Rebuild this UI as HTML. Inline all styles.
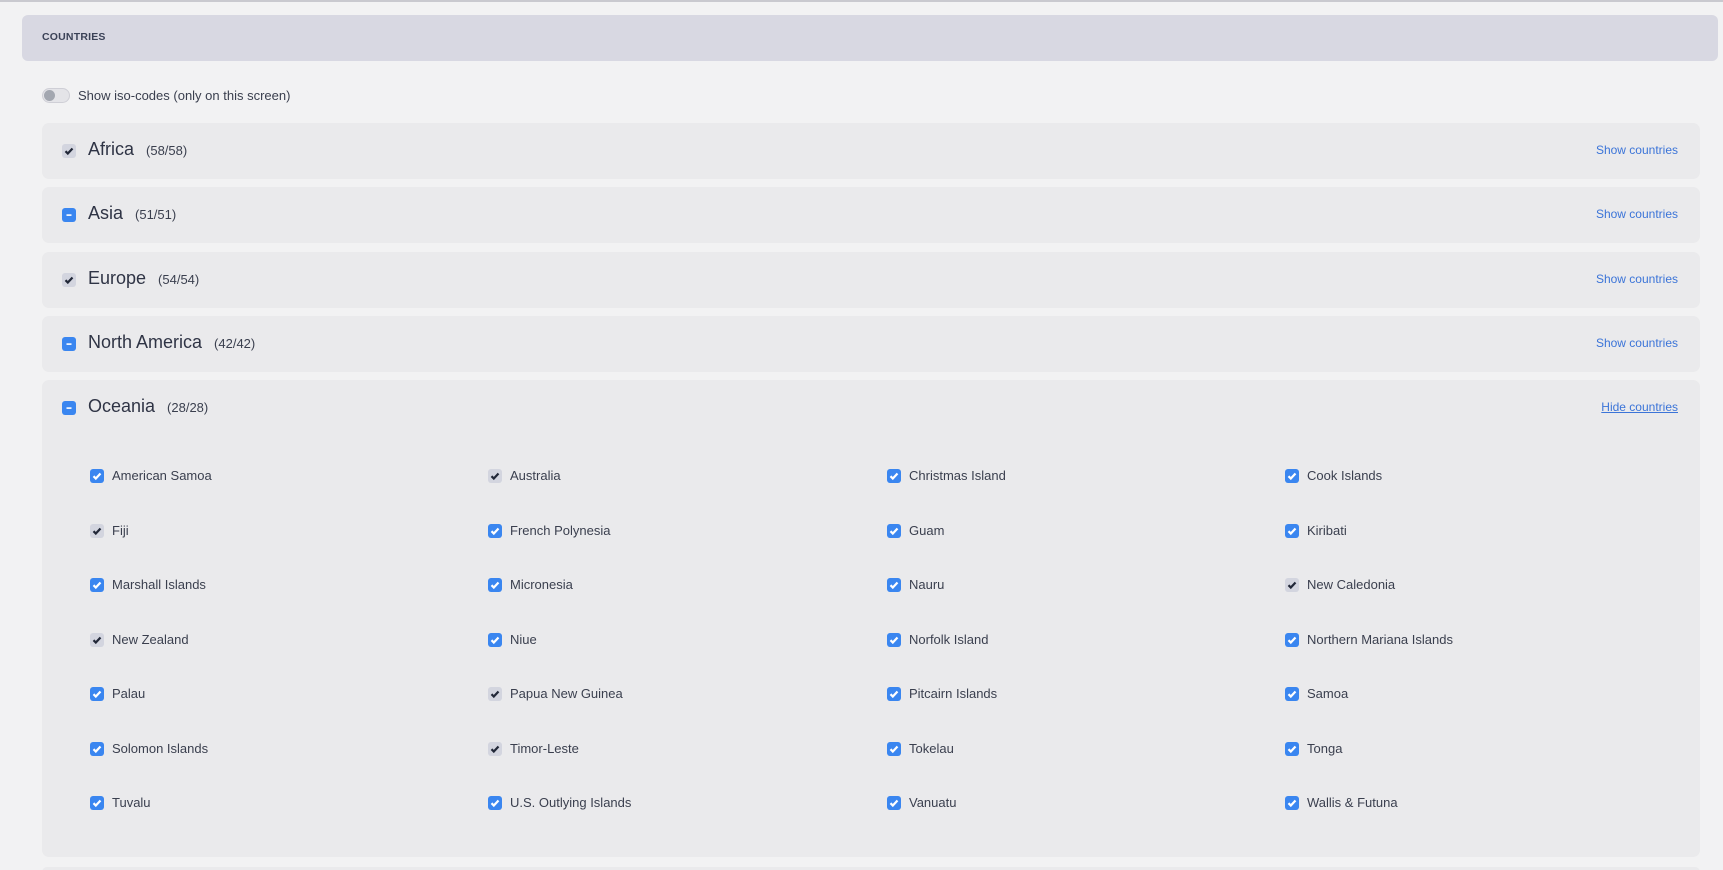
<!DOCTYPE html>
<html style="overflow:hidden;height:870px"><head><meta charset="utf-8"><style>
*{box-sizing:border-box;margin:0;padding:0}
body{width:1723px;height:870px;background:#f2f2f3;font-family:"Liberation Sans",sans-serif;position:relative;overflow:hidden;border-top:2px solid #c9c9cf}
.hdr{position:absolute;left:22px;top:13px;width:1696px;height:46px;background:#d8d8e2;border-radius:6px}
.hdr span{position:absolute;left:20px;top:16px;font-size:10.5px;font-weight:bold;color:#3b4257;letter-spacing:.2px}
.tog{position:absolute;left:42px;top:86px;width:28px;height:15px;border-radius:8px;background:#e4e4e8;border:1px solid #cfcfd6}
.tog:before{content:"";position:absolute;left:1px;top:1px;width:11px;height:11px;border-radius:50%;background:#a3a7b0}
.togl{position:absolute;left:78px;top:86px;font-size:13px;color:#3a3f4e}
.card{position:absolute;left:42px;width:1658px;background:#eaeaec;border-radius:7px}
.cb{position:absolute;width:14px;height:14px;border-radius:3px}
.blue{background:#3a86f0}
.grey{background:#d3d5df}
.cb svg{position:absolute;left:0;top:0}
.title{position:absolute;left:46px;font-size:18px;color:#2f3445}
.cnt{font-size:13px;color:#3a3f4e;margin-left:12px}
.lnk{position:absolute;right:22px;font-size:12px;color:#3b74d8}
.c{position:absolute;font-size:13px;color:#3a3f4e}
</style></head><body>
<div class="hdr"><span>COUNTRIES</span></div>
<div class="tog"></div><div class="togl">Show iso-codes (only on this screen)</div>

<div class="card" style="top:121px;height:56px"></div>
<div class="card" style="top:185px;height:56px"></div>
<div class="card" style="top:250px;height:56px"></div>
<div class="card" style="top:314px;height:56px"></div>
<div class="card" style="top:378px;height:477px"></div>
<div class="card" style="top:865px;height:10px"></div>

<div id="x"></div>
<script>
const chk='<svg width="14" height="14" viewBox="0 0 14 14"><path d="M3.5 7.2l2.3 2.3 4.7-5" fill="none" stroke="COL" stroke-width="2.2"/></svg>';
const minus='<svg width="14" height="14"><rect x="4.5" y="6.3" width="5" height="1.6" fill="#fff"/></svg>';
function box(x,y,t){return `<div class="cb ${t=='g'?'grey':'blue'}" style="left:${x}px;top:${y}px">${t=='g'?chk.replace('COL','#222838'):t=='m'?minus:chk.replace('COL','#fff')}</div>`}
let h='';
const regs=[["Africa","(58/58)",121,'g',"Show countries"],["Asia","(51/51)",185,'m',"Show countries"],["Europe","(54/54)",250,'g',"Show countries"],["North America","(42/42)",314,'m',"Show countries"],["Oceania","(28/28)",378,'m',"Hide countries"]];
regs.forEach(r=>{const cy=r[2]+28;
h+=box(62,cy-7,r[3]);
h+=`<div class="title" style="left:88px;top:${cy-12}px">${r[0]}<span class="cnt">${r[1]}</span></div>`;
h+=`<div class="lnk" style="right:45px;top:${cy-8}px;${r[4][0]=='H'?'text-decoration:underline':''}">${r[4]}</div>`;});
const cs=["American Samoa","Australia","Christmas Island","Cook Islands","Fiji","French Polynesia","Guam","Kiribati","Marshall Islands","Micronesia","Nauru","New Caledonia","New Zealand","Niue","Norfolk Island","Northern Mariana Islands","Palau","Papua New Guinea","Pitcairn Islands","Samoa","Solomon Islands","Timor-Leste","Tokelau","Tonga","Tuvalu","U.S. Outlying Islands","Vanuatu","Wallis & Futuna"];
const grey=["Australia","Fiji","New Caledonia","New Zealand","Papua New Guinea","Timor-Leste"];
const xs=[90,488,887,1285];
cs.forEach((n,i)=>{const x=xs[i%4],y=474+Math.floor(i/4)*54.5;
h+=box(x,Math.round(y-7),grey.includes(n)?'g':'b');
h+=`<div class="c" style="left:${x+22}px;top:${Math.round(y-8)}px">${n.replace('&','&amp;')}</div>`;});
document.getElementById('x').innerHTML=h;
</script>
</body></html>
